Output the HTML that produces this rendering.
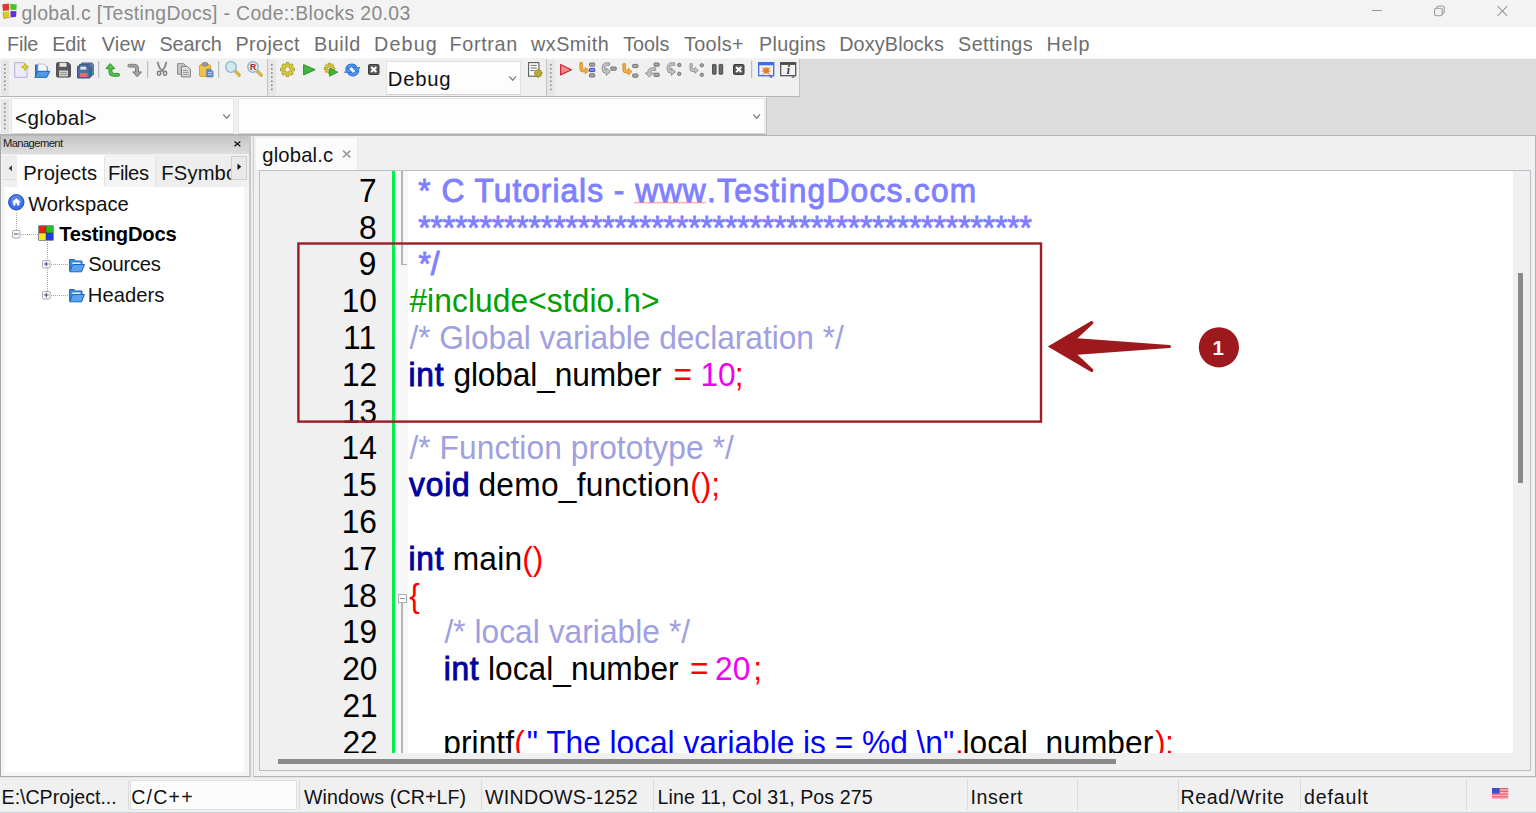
<!DOCTYPE html>
<html><head><meta charset="utf-8"><title>global.c [TestingDocs] - Code::Blocks 20.03</title>
<style>
*{margin:0;padding:0;box-sizing:border-box}
html,body{width:1536px;height:813px;overflow:hidden;background:#f0f0f0}
body{position:relative;font-family:"Liberation Sans",sans-serif;color:#000}
.abs,.t{position:absolute}
.t{line-height:1;white-space:pre}
.c{transform:scaleY(1.02);transform-origin:0 84.65%}
svg{display:block;overflow:visible}
</style></head><body>
<div class="abs" style="left:0px;top:0px;width:1536px;height:27px;background:#f3f3f3;"></div>
<svg class="abs" style="left:2px;top:3px" width="16" height="16" viewBox="0 0 16 16"><path d="M.6 1.200l6.400-.6l.2 6.600l-6 .8z" fill="#e03a30"/><path d="M8.200.8l6.600.600l-.400 5.600l-6-.2z" fill="#48c030"/><path d="M1 8.900l6.200-.7l.3 6.300l-5.700 1z" fill="#d8cc28"/><path d="M8.500 8l6 .2l-.5 5.600l-5.400.8z" fill="#6030d0"/><path d="M.6 1.200l.600 6.800M1 8.900l.8 6.600l5.700-1" fill="none" stroke="#7a2a20" stroke-width=".6" opacity=".6"/></svg>
<div class="t" style="left:21.45px;top:4.00px;font-size:19.4px;color:#8a8a8a;letter-spacing:0.352px;">global.c [TestingDocs] - Code::Blocks 20.03</div>
<svg class="abs" style="left:1360px;top:0" width="176" height="27" viewBox="0 0 176 27" fill="none" stroke="#9a9a9a" stroke-width="1.100"><path d="M12 10.500h9.800"/><rect x="74.600" y="8.200" width="7.600" height="7.600" rx="1.600"/><path d="M76.800 8.200V7.600A1.600 1.600 0 0 1 78.400 6h4.200A1.600 1.600 0 0 1 84.200 7.600v4.200A1.600 1.600 0 0 1 82.600 13.400H82.200"/><path d="M137.600 6.100l9.600 9.800M147.200 6.100l-9.600 9.800"/></svg>
<div class="abs" style="left:0px;top:27px;width:1536px;height:31px;background:#fff;"></div>
<div class="t" style="left:7.00px;top:35.00px;font-size:19.8px;color:#6e6e6e;letter-spacing:-0.167px;">File</div>
<div class="t" style="left:52.20px;top:35.00px;font-size:19.8px;color:#6e6e6e;letter-spacing:-0.067px;">Edit</div>
<div class="t" style="left:101.75px;top:35.00px;font-size:19.8px;color:#6e6e6e;letter-spacing:0.250px;">View</div>
<div class="t" style="left:159.50px;top:35.00px;font-size:19.8px;color:#6e6e6e;letter-spacing:-0.100px;">Search</div>
<div class="t" style="left:235.50px;top:35.00px;font-size:19.8px;color:#6e6e6e;letter-spacing:0.417px;">Project</div>
<div class="t" style="left:314.00px;top:35.00px;font-size:19.8px;color:#6e6e6e;letter-spacing:0.562px;">Build</div>
<div class="t" style="left:374.00px;top:35.00px;font-size:19.8px;color:#6e6e6e;letter-spacing:1.125px;">Debug</div>
<div class="t" style="left:449.50px;top:35.00px;font-size:19.8px;color:#6e6e6e;letter-spacing:0.667px;">Fortran</div>
<div class="t" style="left:531.00px;top:35.00px;font-size:19.8px;color:#6e6e6e;letter-spacing:0.500px;">wxSmith</div>
<div class="t" style="left:623.20px;top:35.00px;font-size:19.8px;color:#6e6e6e;">Tools</div>
<div class="t" style="left:684.00px;top:35.00px;font-size:19.8px;color:#6e6e6e;letter-spacing:0.350px;">Tools+</div>
<div class="t" style="left:759.00px;top:35.00px;font-size:19.8px;color:#6e6e6e;letter-spacing:0.292px;">Plugins</div>
<div class="t" style="left:839.20px;top:35.00px;font-size:19.8px;color:#6e6e6e;letter-spacing:0.139px;">DoxyBlocks</div>
<div class="t" style="left:958.00px;top:35.00px;font-size:19.8px;color:#6e6e6e;letter-spacing:0.464px;">Settings</div>
<div class="t" style="left:1046.50px;top:35.00px;font-size:19.8px;color:#6e6e6e;letter-spacing:0.733px;">Help</div>
<div class="abs" style="left:0px;top:58px;width:1536px;height:78px;background:#dcdcdc;"></div>
<div class="abs" style="left:0px;top:135px;width:1536px;height:1px;background:#b4b4b4;"></div>
<div class="abs" style="left:0px;top:58px;width:800px;height:38.5px;background:#f0f0f0;border-right:1px solid #c2c2c2;border-bottom:1px solid #b4b4b4"></div>
<div class="abs" style="left:0px;top:58px;width:1536px;height:1px;background:#f4f4f4;"></div>
<div class="abs" style="left:0px;top:97px;width:766.8px;height:38px;background:#f0f0f0;border-right:1px solid #c2c2c2;border-bottom:1px solid #b4b4b4;border-top:1px solid #fafafa"></div>
<div class="abs" style="left:1px;top:60.3px;width:8px;height:36px;background:#e6e6e6;"></div>
<svg class="abs" style="left:4.2px;top:64.3px" width="3" height="30" fill="#8a8a8a"><rect x="0" y="0.0" width="1.6" height="1.6"/><rect x="0" y="4.1" width="1.6" height="1.6"/><rect x="0" y="8.2" width="1.6" height="1.6"/><rect x="0" y="12.3" width="1.6" height="1.6"/><rect x="0" y="16.4" width="1.6" height="1.6"/><rect x="0" y="20.5" width="1.6" height="1.6"/><rect x="0" y="24.6" width="1.6" height="1.6"/></svg>
<div class="abs" style="left:268px;top:60.3px;width:8px;height:36px;background:#e6e6e6;"></div>
<svg class="abs" style="left:271.2px;top:64.3px" width="3" height="30" fill="#8a8a8a"><rect x="0" y="0.0" width="1.6" height="1.6"/><rect x="0" y="4.1" width="1.6" height="1.6"/><rect x="0" y="8.2" width="1.6" height="1.6"/><rect x="0" y="12.3" width="1.6" height="1.6"/><rect x="0" y="16.4" width="1.6" height="1.6"/><rect x="0" y="20.5" width="1.6" height="1.6"/><rect x="0" y="24.6" width="1.6" height="1.6"/></svg>
<div class="abs" style="left:547px;top:60.3px;width:8px;height:36px;background:#e6e6e6;"></div>
<svg class="abs" style="left:550.2px;top:64.3px" width="3" height="30" fill="#8a8a8a"><rect x="0" y="0.0" width="1.6" height="1.6"/><rect x="0" y="4.1" width="1.6" height="1.6"/><rect x="0" y="8.2" width="1.6" height="1.6"/><rect x="0" y="12.3" width="1.6" height="1.6"/><rect x="0" y="16.4" width="1.6" height="1.6"/><rect x="0" y="20.5" width="1.6" height="1.6"/><rect x="0" y="24.6" width="1.6" height="1.6"/></svg>
<div class="abs" style="left:266.5px;top:59px;width:1px;height:37px;background:#c2c2c2;"></div>
<div class="abs" style="left:545.5px;top:59px;width:1px;height:37px;background:#c2c2c2;"></div>
<div class="abs" style="left:1px;top:100px;width:8px;height:33px;background:#e6e6e6;"></div>
<svg class="abs" style="left:4.2px;top:103px" width="3" height="30" fill="#8a8a8a"><rect x="0" y="0.0" width="1.6" height="1.6"/><rect x="0" y="4.1" width="1.6" height="1.6"/><rect x="0" y="8.2" width="1.6" height="1.6"/><rect x="0" y="12.3" width="1.6" height="1.6"/><rect x="0" y="16.4" width="1.6" height="1.6"/><rect x="0" y="20.5" width="1.6" height="1.6"/><rect x="0" y="24.6" width="1.6" height="1.6"/></svg>
<div class="abs" style="left:98px;top:61px;width:1px;height:17px;background:#bcbcbc;"></div>
<div class="abs" style="left:99px;top:61px;width:1px;height:17px;background:#e4e4e4;"></div>
<div class="abs" style="left:147px;top:61px;width:1px;height:17px;background:#bcbcbc;"></div>
<div class="abs" style="left:148px;top:61px;width:1px;height:17px;background:#e4e4e4;"></div>
<div class="abs" style="left:218px;top:61px;width:1px;height:17px;background:#bcbcbc;"></div>
<div class="abs" style="left:219px;top:61px;width:1px;height:17px;background:#e4e4e4;"></div>
<div class="abs" style="left:751px;top:61px;width:1px;height:17px;background:#bcbcbc;"></div>
<div class="abs" style="left:752px;top:61px;width:1px;height:17px;background:#e4e4e4;"></div>
<svg class="abs" style="left:14px;top:62px" width="14.5" height="16" viewBox="0 0 14.5 16"><path d="M.7.7h9.300l3 3v11.600h-12.300z" fill="#ececfa" stroke="#b4acd4" stroke-width="1"/><path d="M11 1.600l1 2.300l2.300 1l-2.300 1l-1 2.300l-1-2.300l-2.300-1l2.300-1z" fill="#f0e850" stroke="#c8bc20" stroke-width="1.300" stroke-linejoin="round"/></svg>
<svg class="abs" style="left:33.5px;top:62.5px" width="16.5" height="15" viewBox="0 0 16.5 15"><path d="M1.500 12.500v-10.500h4l1.500 1.500h6v9z" fill="#3d86d8" stroke="#1e62b4" stroke-width="1"/><path d="M4 9v-8h6l3 3v6z" fill="#f4f6fc" stroke="#9aa6c4" stroke-width=".7"/><path d="M.8 14.300l3-6h12l-3 6z" fill="#4e9be8" stroke="#1e62b4" stroke-width="1"/></svg>
<svg class="abs" style="left:56px;top:62px" width="15" height="15.5" viewBox="0 0 15 15.500"><path d="M.7 1.700a1 1 0 0 1 1-1h10.600l2 2v11.300a1 1 0 0 1-1 1h-11.600a1 1 0 0 1-1-1z" fill="#5a5a5a" stroke="#3c3c3c" stroke-width="1"/><rect x="3.500" y=".8" width="7" height="4" fill="#e4e4e4"/><rect x="3" y="8.500" width="9" height="6" fill="#d0d0d0"/><path d="M4 10.500h7M4 12.500h7" stroke="#8a8a8a" stroke-width=".8"/></svg>
<svg class="abs" style="left:76.5px;top:61.5px" width="17" height="16.5" viewBox="0 0 17 16.500"><path d="M4.500 1h10.500l1.300 1.300v10.700h-11.800z" fill="#6d88b4" stroke="#3c5684" stroke-width=".9"/><path d="M2.500 2.500h10.500l1.300 1.300v10.700h-11.800z" fill="#5f7cae" stroke="#3c5684" stroke-width=".9"/><path d="M.6 4.200h10.800l1.600 1.600v10.200h-12.400z" fill="#4f6ea4" stroke="#34507e" stroke-width="1"/><rect x="3.300" y="4.600" width="6" height="3" fill="#dfe6f2"/><rect x="3" y="11" width="7.500" height="4" fill="#e46a74"/></svg>
<svg class="abs" style="left:105.3px;top:62.8px" width="15" height="13.5" viewBox="0 0 15 13.500"><path d="M5.200.6l4.600 5h-2.800v3.200a1.600 1.600 0 0 0 1.600 1.600h4.600a1.400 1.400 0 0 1 0 2.800h-5.200a4 4 0 0 1-4-4v-3.600h-3z" fill="#56c452" stroke="#2a9428" stroke-width="1" stroke-linejoin="round"/></svg>
<svg class="abs" style="left:127px;top:63.8px" width="15.5" height="13.5" viewBox="0 0 15.500 13.500"><path d="M10.300 12.900l-4.600-5h2.800v-3.200a1.600 1.600 0 0 0-1.600-1.600h-4.600a1.400 1.400 0 0 1 0-2.800h5.200a4 4 0 0 1 4 4v3.600h3z" fill="#a4a4a4" stroke="#7c7c7c" stroke-width="1" stroke-linejoin="round"/></svg>
<svg class="abs" style="left:156.3px;top:62.3px" width="12" height="14" viewBox="0 0 12 14"><path d="M1.800.8c.6 3.600 2.200 6 4.200 8.400M10.200.8c-.6 3.600-2.200 6-4.200 8.400" fill="none" stroke="#8c8c8c" stroke-width="2" stroke-linecap="round"/><ellipse cx="3" cy="11.300" rx="1.700" ry="2.100" fill="#d8d8d8" stroke="#7a7a7a" stroke-width="1.200"/><ellipse cx="9" cy="11.300" rx="1.700" ry="2.100" fill="#d8d8d8" stroke="#7a7a7a" stroke-width="1.200"/></svg>
<svg class="abs" style="left:177.3px;top:63px" width="14" height="14.5" viewBox="0 0 14 14.500"><path d="M.6.600h6l2.400 2.400v8.200h-8.400z" fill="#c8c8c8" stroke="#8a8a8a" stroke-width="1"/><path d="M4.400 3.300h6l3 3v7.600h-9z" fill="#dcdcdc" stroke="#7c7c7c" stroke-width="1"/><path d="M6 7.500h5M6 9.500h5.500M6 11.500h5.500" stroke="#8a8a8a" stroke-width=".8"/></svg>
<svg class="abs" style="left:198.8px;top:61.8px" width="14.5" height="15.5" viewBox="0 0 14.500 15.500"><rect x=".6" y="2.800" width="10.800" height="11.600" rx="1" fill="#f0c448" stroke="#d0a020" stroke-width="1"/><rect x="3.300" y=".6" width="5.400" height="3.400" rx="1.400" fill="#9c9ca4" stroke="#74747c" stroke-width=".8"/><path d="M7.600 7.200h4.200l2.200 2.200v5.500h-6.400z" fill="#4c8ee0" stroke="#7a8494" stroke-width=".9"/><path d="M9 10.500h3.600M9 12.500h3.600" stroke="#cfe0f8" stroke-width=".8"/></svg>
<svg class="abs" style="left:225.2px;top:61.3px" width="16" height="16" viewBox="0 0 16 16"><path d="M9.200 9.200l5 5" stroke="#c4a228" stroke-width="3.200" stroke-linecap="round"/><path d="M9.200 9.200l5 5" stroke="#e0c450" stroke-width="1.400" stroke-linecap="round"/><circle cx="6" cy="6" r="5.300" fill="#d4e8f0" stroke="#88b8d0" stroke-width="1.300"/></svg>
<svg class="abs" style="left:246.8px;top:61.3px" width="16" height="16" viewBox="0 0 16 16"><path d="M9.200 9.200l5 5" stroke="#c4a228" stroke-width="3.200" stroke-linecap="round"/><path d="M9.200 9.200l5 5" stroke="#e0c450" stroke-width="1.400" stroke-linecap="round"/><circle cx="6" cy="6" r="5.300" fill="#d4e8f0" stroke="#88b8d0" stroke-width="1.300"/><text x="6.100" y="9.300" font-family="Liberation Sans,sans-serif" font-weight="bold" font-size="8.500" fill="#c02028" text-anchor="middle">R</text></svg>
<svg class="abs" style="left:279.5px;top:62.3px" width="15" height="15" viewBox="0 0 15 15"><path d="M12.16 5.97L14.48 6.21L14.48 8.79L12.16 9.03L11.87 9.71L13.35 11.53L11.53 13.35L9.71 11.87L9.03 12.16L8.79 14.48L6.21 14.48L5.97 12.16L5.29 11.87L3.47 13.35L1.65 11.53L3.13 9.71L2.84 9.03L0.52 8.79L0.52 6.21L2.84 5.97L3.13 5.29L1.65 3.47L3.47 1.65L5.29 3.13L5.97 2.84L6.21 0.52L8.79 0.52L9.03 2.84L9.71 3.13L11.53 1.65L13.35 3.47L11.87 5.29z" fill="#dccb3c" stroke="#9a8e20" stroke-width=".8" stroke-linejoin="round"/><circle cx="7.5" cy="7.5" r="2.7" fill="#f0f0f0" stroke="#9a8e20" stroke-width=".8"/></svg>
<svg class="abs" style="left:302.5px;top:64px" width="13" height="11.5" viewBox="0 0 13 11.500"><path d="M.6.600l11.600 5.100l-11.600 5.200z" fill="#3fb63c" stroke="#2c942c" stroke-width="1" stroke-linejoin="round"/></svg>
<svg class="abs" style="left:323.5px;top:62.8px" width="14.5" height="13.8" viewBox="0 0 14.500 13.800"><path d="M8.92 4.38L10.71 4.54L10.71 6.46L8.92 6.62L8.71 7.13L9.87 8.50L8.50 9.87L7.13 8.71L6.62 8.92L6.46 10.71L4.54 10.71L4.38 8.92L3.87 8.71L2.50 9.87L1.13 8.50L2.29 7.13L2.08 6.62L0.29 6.46L0.29 4.54L2.08 4.38L2.29 3.87L1.13 2.50L2.50 1.13L3.87 2.29L4.38 2.08L4.54 0.29L6.46 0.29L6.62 2.08L7.13 2.29L8.50 1.13L9.87 2.50L8.71 3.87z" fill="#dccb3c" stroke="#9a8e20" stroke-width=".8" stroke-linejoin="round"/><circle cx="5.5" cy="5.5" r="1.9" fill="#f0f0f0" stroke="#9a8e20" stroke-width=".8"/><path d="M5.600 5.200l8.200 4l-8.200 4z" fill="#3fb63c" stroke="#2c942c" stroke-width=".9" stroke-linejoin="round"/></svg>
<svg class="abs" style="left:343.5px;top:62.5px" width="16.5" height="14" viewBox="0 0 16.500 14"><g fill="none" stroke-linecap="butt"><path d="M3 6.800a4.600 4.600 0 0 1 8.600-2" stroke="#1e62c8" stroke-width="3.600"/><path d="M13.500 7.200a4.600 4.600 0 0 1-8.600 2" stroke="#1e62c8" stroke-width="3.600"/><path d="M3 6.800a4.600 4.600 0 0 1 8.600-2" stroke="#4c98f4" stroke-width="2.200"/><path d="M13.500 7.200a4.600 4.600 0 0 1-8.600 2" stroke="#4c98f4" stroke-width="2.200"/></g><path d="M8.600 4.600h7.400l-3.500 4.400z" fill="#4c98f4" stroke="#1e62c8" stroke-width=".7" stroke-linejoin="round"/><path d="M7.900 9.400h-7.400l3.500-4.400z" fill="#4c98f4" stroke="#1e62c8" stroke-width=".7" stroke-linejoin="round"/></svg>
<svg class="abs" style="left:368px;top:64.2px" width="11.5" height="11" viewBox="0 0 11.500 11"><rect x=".5" y=".5" width="10.500" height="10" rx="1.300" fill="#5a5a5a" stroke="#3a3a3a" stroke-width="1"/><path d="M3.200 3l5.100 5M8.300 3l-5.100 5" stroke="#fff" stroke-width="2"/></svg>
<div class="abs" style="left:386px;top:60.5px;width:135px;height:34px;background:#fdfdfd;border:1px solid #e2e2e2;border-bottom-color:#d0d0d0"></div>
<div class="t" style="left:387.85px;top:69.00px;font-size:20.3px;color:#111;letter-spacing:0.737px;">Debug</div>
<svg class="abs" style="left:509.3px;top:76px" width="7.4" height="4.8" viewBox="0 0 7.4 4.8"><path d="M.3 .4l3.40 3.8l3.40 -3.8" fill="none" stroke="#7c7c7c" stroke-width="1.300"/></svg>
<svg class="abs" style="left:527.8px;top:62.3px" width="14.5" height="15.5" viewBox="0 0 14.500 15.500"><rect x=".6" y=".6" width="10.300" height="13.600" fill="#fcfcfc" stroke="#5a5a5a" stroke-width="1.100"/><path d="M2.600 3.400h6.200M2.600 6h6.200M2.600 8.600h4" stroke="#6a6a6a" stroke-width="1"/><path d="M12.86 10.43L14.04 10.59L14.04 12.01L12.86 12.17L12.70 12.57L13.41 13.51L12.41 14.51L11.47 13.80L11.07 13.96L10.91 15.14L9.49 15.14L9.33 13.96L8.93 13.80L7.99 14.51L6.99 13.51L7.70 12.57L7.54 12.17L6.36 12.01L6.36 10.59L7.54 10.43L7.70 10.03L6.99 9.09L7.99 8.09L8.93 8.80L9.33 8.64L9.49 7.46L10.91 7.46L11.07 8.64L11.47 8.80L12.41 8.09L13.41 9.09L12.70 10.03z" fill="#c8b428" stroke="#8c8018" stroke-width=".8" stroke-linejoin="round"/><circle cx="10.2" cy="11.3" r="1.1" fill="#f0f0f0" stroke="#8c8018" stroke-width=".8"/></svg>
<svg class="abs" style="left:559.5px;top:64px" width="12" height="11.5" viewBox="0 0 12 11.500"><path d="M.6.600l10.800 5.100l-10.800 5.200z" fill="#f08a8a" stroke="#d02030" stroke-width="1.100" stroke-linejoin="round"/></svg>
<svg class="abs" style="left:578.8px;top:62px" width="16.5" height="16" viewBox="0 0 16.500 16"><path d="M1 .7h2.400v5.300a1.300 1.300 0 0 0 1.300 1.300h1.600v-2l3.600 3.300l-3.600 3.300v-2h-2.400a3 3 0 0 1-3-3v-5.900z" fill="#f4b048" stroke="#d08a20" stroke-width=".9" stroke-linejoin="round"/><rect x="10.5" y="1" width="5.2" height="3.2" rx=".6" fill="#a8a8a8" stroke="#6a6a6a" stroke-width=".9"/><rect x="10.5" y="6.4" width="5.2" height="3.2" rx=".6" fill="#7a8cf4" stroke="#2c3cd0" stroke-width=".9"/><rect x="10.5" y="11.8" width="5.2" height="3.2" rx=".6" fill="#a8a8a8" stroke="#6a6a6a" stroke-width=".9"/></svg>
<svg class="abs" style="left:601.3px;top:61.8px" width="16" height="16" viewBox="0 0 16 16"><path d="M8.600.8h-3.200a4.200 4.200 0 0 0-4.200 4.200v2.600a3.600 3.600 0 0 0 3.600 3.600h.6v2.200l4-3.700l-4-3.700v2.300h-.400a1 1 0 0 1-1-1v-2.300a1.600 1.600 0 0 1 1.600-1.600h3z" fill="#c4c4c4" stroke="#8e8e8e" stroke-width=".9" stroke-linejoin="round"/><rect x="9.8" y="5" width="5.4" height="3.2" rx=".6" fill="#a8a8a8" stroke="#6a6a6a" stroke-width=".9"/></svg>
<svg class="abs" style="left:621.8px;top:62.5px" width="16.5" height="15" viewBox="0 0 16.500 15"><path d="M1 .7h2.400v5.300a1.300 1.300 0 0 0 1.300 1.300h1.600v-2l3.600 3.300l-3.600 3.300v-2h-2.400a3 3 0 0 1-3-3v-5.900z" fill="#f4b048" stroke="#d08a20" stroke-width=".9" stroke-linejoin="round"/><rect x="10.7" y="1.4" width="5.2" height="3.2" rx=".6" fill="#a8a8a8" stroke="#6a6a6a" stroke-width=".9"/><rect x="10.7" y="11" width="5.2" height="3.2" rx=".6" fill="#a8a8a8" stroke="#6a6a6a" stroke-width=".9"/></svg>
<svg class="abs" style="left:644px;top:62px" width="15.5" height="16" viewBox="0 0 15.500 16"><path d="M11.600 5.800h-3.600a4.200 4.200 0 0 0-4.200 4.200v1h-2.800l4.200 4l4.200-4h-2.800v-1a1.400 1.400 0 0 1 1.400-1.400h3.600z" fill="#c4c4c4" stroke="#8e8e8e" stroke-width=".9" stroke-linejoin="round"/><rect x="10" y="1" width="5.2" height="3.2" rx=".6" fill="#a8a8a8" stroke="#6a6a6a" stroke-width=".9"/><rect x="10" y="11.2" width="5.2" height="3.2" rx=".6" fill="#a8a8a8" stroke="#6a6a6a" stroke-width=".9"/></svg>
<svg class="abs" style="left:666px;top:61.8px" width="16" height="16" viewBox="0 0 16 16"><path d="M8.600.8h-3.200a4.200 4.200 0 0 0-4.200 4.200v2.600a3.600 3.600 0 0 0 3.600 3.600h.6v2.200l4-3.700l-4-3.700v2.300h-.400a1 1 0 0 1-1-1v-2.300a1.600 1.600 0 0 1 1.600-1.600h3z" fill="#c4c4c4" stroke="#8e8e8e" stroke-width=".9" stroke-linejoin="round"/><circle cx="13.3" cy="3" r="1.700" fill="#a8a8a8" stroke="#6a6a6a" stroke-width=".9"/><circle cx="13.3" cy="11.8" r="1.700" fill="#a8a8a8" stroke="#6a6a6a" stroke-width=".9"/></svg>
<svg class="abs" style="left:688.5px;top:63px" width="15.5" height="14.5" viewBox="0 0 15.500 14.500"><path d="M1 .7h2.200v4.300a1.200 1.200 0 0 0 1.200 1.200h1.500v-1.800l3.400 3l-3.400 3v-1.800h-2.200a2.700 2.700 0 0 1-2.700-2.700z" fill="#c4c4c4" stroke="#8e8e8e" stroke-width=".9" stroke-linejoin="round"/><circle cx="12.8" cy="2.3" r="1.700" fill="#a8a8a8" stroke="#6a6a6a" stroke-width=".9"/><circle cx="12.8" cy="11.8" r="1.700" fill="#a8a8a8" stroke="#6a6a6a" stroke-width=".9"/></svg>
<svg class="abs" style="left:711.5px;top:64.3px" width="12" height="10.8" viewBox="0 0 12 10.800"><rect x=".5" y=".4" width="3.600" height="9.800" rx=".5" fill="#6a6a6a" stroke="#3a3a3a" stroke-width=".8"/><rect x="7.100" y=".4" width="3.600" height="9.800" rx=".5" fill="#6a6a6a" stroke="#3a3a3a" stroke-width=".8"/></svg>
<svg class="abs" style="left:732.8px;top:64.2px" width="11.5" height="11" viewBox="0 0 11.500 11"><rect x=".5" y=".5" width="10.500" height="10" rx="1.300" fill="#5a5a5a" stroke="#3a3a3a" stroke-width="1"/><path d="M3.200 3l5.100 5M8.300 3l-5.100 5" stroke="#fff" stroke-width="2"/></svg>
<svg class="abs" style="left:757.8px;top:61.8px" width="16.5" height="16" viewBox="0 0 16.500 16"><rect x=".7" y=".7" width="15" height="13" fill="#f4f4fa" stroke="#3c6ce8" stroke-width="1.300"/><rect x=".7" y=".7" width="15" height="2.600" fill="#3c6ce8"/><ellipse cx="8.200" cy="8.600" rx="2.800" ry="3.300" fill="#e88a30"/><path d="M3.800 5.500l3 2M12.600 5.500l-3 2M3.600 9h9.200M4.200 12.800l2.600-2.400M12.200 12.800l-2.600-2.400" stroke="#c06a20" stroke-width=".8"/><path d="M11 14.400h4l-2 1.600z" fill="#444"/></svg>
<svg class="abs" style="left:779.7px;top:61.8px" width="16.5" height="16" viewBox="0 0 16.500 16"><rect x=".7" y=".7" width="15" height="13" fill="#f2f2f2" stroke="#4a4a4a" stroke-width="1.200"/><rect x=".7" y=".7" width="15" height="2.200" fill="#4a4a4a"/><text x="8.300" y="12.300" font-family="Liberation Serif,serif" font-style="italic" font-weight="bold" font-size="11.500" fill="#333" text-anchor="middle">i</text><path d="M11 14.400h4l-2 1.600z" fill="#444"/></svg>
<div class="abs" style="left:11px;top:98px;width:223px;height:36px;background:#fdfdfd;border:1px solid #e6e6e6;border-bottom-color:#d2d2d2"></div>
<div class="abs" style="left:237.5px;top:98px;width:527.5px;height:36px;background:#fdfdfd;border:1px solid #e6e6e6;border-bottom-color:#d2d2d2"></div>
<div class="t" style="left:15.00px;top:108.00px;font-size:20.6px;color:#111;letter-spacing:0.357px;">&lt;global&gt;</div>
<svg class="abs" style="left:223px;top:113.9px" width="7.4" height="4.8" viewBox="0 0 7.4 4.8"><path d="M.3 .4l3.40 3.8l3.40 -3.8" fill="none" stroke="#7c7c7c" stroke-width="1.300"/></svg>
<svg class="abs" style="left:752.8px;top:113.9px" width="7.4" height="4.8" viewBox="0 0 7.4 4.8"><path d="M.3 .4l3.40 3.8l3.40 -3.8" fill="none" stroke="#7c7c7c" stroke-width="1.300"/></svg>
<div class="abs" style="left:0px;top:136px;width:254px;height:641px;background:#f0f0f0;"></div>
<div class="abs" style="left:0px;top:135.5px;width:249px;height:18px;background:linear-gradient(#c4c4c4,#dedede);"></div>
<div class="t" style="left:2.90px;top:138.00px;font-size:11.2px;color:#1a1a1a;letter-spacing:-0.572px;">Management</div>
<svg class="abs" style="left:234.200px;top:140.800px" width="6.800" height="5.600" viewBox="0 0 6.800 5.600"><path d="M.5.400l5.800 4.800M6.300.400l-5.800 4.800" stroke="#111" stroke-width="1.300"/></svg>
<div class="abs" style="left:249px;top:136px;width:1.5px;height:641px;background:#c9c9c9;"></div>
<div class="abs" style="left:250.5px;top:136px;width:2px;height:641px;background:#ececec;"></div>
<div class="abs" style="left:252.8px;top:136px;width:1.2px;height:641px;background:#cdcdcd;"></div>
<div class="abs" style="left:17px;top:154.5px;width:87.5px;height:33px;background:#fdfdfd;"></div>
<div class="abs" style="left:104.5px;top:156.5px;width:50px;height:30px;background:#f4f4f4;"></div>
<div class="abs" style="left:154.5px;top:156.5px;width:77px;height:30px;background:#ededed;"></div>
<div class="abs" style="left:104px;top:157px;width:1px;height:29px;background:#e2e2e2;"></div>
<div class="abs" style="left:154.5px;top:157px;width:1px;height:29px;background:#e2e2e2;"></div>
<div class="t" style="left:23.25px;top:163.00px;font-size:20.2px;color:#111;letter-spacing:0.129px;">Projects</div>
<div class="t" style="left:108.05px;top:163.00px;font-size:20.2px;color:#111;letter-spacing:-0.412px;">Files</div>
<div class="abs" style="left:161px;top:155px;width:70px;height:31px;overflow:hidden">
<div class="t " style="left:0.30px;top:7.80px;font-size:20.2px;color:#111;letter-spacing:0.151px;">FSymbols</div>
</div>
<div class="abs" style="left:231px;top:155.5px;width:15.5px;height:24.5px;background:#e9e9e9;border:1px solid #cfcfcf"></div>
<svg class="abs" style="left:236.500px;top:163px" width="5" height="8"><path d="M.5.500l3.800 3.300l-3.800 3.300z" fill="#111"/></svg>
<div class="abs" style="left:2.5px;top:155.5px;width:14px;height:24.5px;background:#ededed;border-bottom:1px solid #dcdcdc"></div>
<svg class="abs" style="left:7.500px;top:164.500px" width="5" height="7"><path d="M4 .3l-3.400 3l3.400 3z" fill="#444"/></svg>
<div class="abs" style="left:1px;top:186.8px;width:247.6px;height:589px;background:#f5f5f5;"></div>
<div class="abs" style="left:5.4px;top:187px;width:239px;height:584.5px;background:#fff;"></div>
<div class="abs" style="left:0px;top:136px;width:1px;height:641px;background:#a6a6a6;"></div>
<div class="abs" style="left:16px;top:213px;width:1px;height:17px;background:repeating-linear-gradient(to bottom,#a8a8a8 0 1px,transparent 1px 2px);"></div>
<div class="abs" style="left:20.5px;top:234px;width:17px;height:1px;background:repeating-linear-gradient(to right,#a8a8a8 0 1px,transparent 1px 2px);"></div>
<div class="abs" style="left:46.5px;top:242px;width:1px;height:54px;background:repeating-linear-gradient(to bottom,#a8a8a8 0 1px,transparent 1px 2px);"></div>
<div class="abs" style="left:51px;top:264px;width:17px;height:1px;background:repeating-linear-gradient(to right,#a8a8a8 0 1px,transparent 1px 2px);"></div>
<div class="abs" style="left:51px;top:294.5px;width:17px;height:1px;background:repeating-linear-gradient(to right,#a8a8a8 0 1px,transparent 1px 2px);"></div>
<svg class="abs" style="left:12.3px;top:230px" width="8.500" height="8.500" viewBox="0 0 8.500 8.500"><rect x=".5" y=".5" width="7.500" height="7.500" rx="1" fill="#fafafa" stroke="#a4a4a4" stroke-width=".9"/><path d="M2 4h4.500" stroke="#3c4a8c" stroke-width="1"/></svg>
<svg class="abs" style="left:42.3px;top:260px" width="8.500" height="8.500" viewBox="0 0 8.500 8.500"><rect x=".5" y=".5" width="7.500" height="7.500" rx="1" fill="#fafafa" stroke="#a4a4a4" stroke-width=".9"/><path d="M2 4h4.500" stroke="#3c4a8c" stroke-width="1"/><path d="M4.250 1.800v4.500" stroke="#3c4a8c" stroke-width="1"/></svg>
<svg class="abs" style="left:42.3px;top:290.5px" width="8.500" height="8.500" viewBox="0 0 8.500 8.500"><rect x=".5" y=".5" width="7.500" height="7.500" rx="1" fill="#fafafa" stroke="#a4a4a4" stroke-width=".9"/><path d="M2 4h4.500" stroke="#3c4a8c" stroke-width="1"/><path d="M4.250 1.800v4.500" stroke="#3c4a8c" stroke-width="1"/></svg>
<svg class="abs" style="left:7.600px;top:194.400px" width="16.600" height="16.600" viewBox="0 0 16.600 16.600"><circle cx="8.300" cy="8.300" r="7.700" fill="#3a6ee8" stroke="#2446b8" stroke-width="1"/><circle cx="8.300" cy="6.500" r="5.500" fill="#6c98f4" opacity=".55"/><path d="M8.300 4.200l4.300 3.900h-1.300v3.500h-2v-2.300h-2v2.300h-2v-3.500h-1.300z" fill="#fff"/></svg>
<div class="t" style="left:28.15px;top:194.00px;font-size:20.2px;color:#111;">Workspace</div>
<svg class="abs" style="left:38.400px;top:225px" width="16" height="16" viewBox="0 0 16 16"><rect x=".5" y=".5" width="15" height="15" fill="#222"/><rect x="1" y="1" width="6.800" height="6.800" fill="#e8221c"/><rect x="8.200" y="1" width="6.800" height="6.800" fill="#22c01c"/><rect x="1" y="8.200" width="6.800" height="6.800" fill="#f4e81c"/><rect x="8.200" y="8.200" width="6.800" height="6.800" fill="#1c3ce8"/></svg>
<div class="t" style="left:59.15px;top:224.00px;font-size:20.2px;font-weight:bold;letter-spacing:-0.210px;">TestingDocs</div>
<svg class="abs" style="left:68.8px;top:257.6px" width="16" height="14.500" viewBox="0 0 16 14.500"><path d="M.6 12.500v-11h4.600l1.300 1.500h6.500v9.500z" fill="#3c8ae0" stroke="#1e62b8" stroke-width="1"/><path d="M3.300 4.500h8.200v5h-8.200z" fill="#e8f0fc"/><path d="M.7 13.800l3-7.300h11.800l-3 7.300z" fill="#58a4f0" stroke="#1e62b8" stroke-width="1" stroke-linejoin="round"/></svg>
<svg class="abs" style="left:68.8px;top:288.1px" width="16" height="14.500" viewBox="0 0 16 14.500"><path d="M.6 12.500v-11h4.600l1.300 1.500h6.500v9.500z" fill="#3c8ae0" stroke="#1e62b8" stroke-width="1"/><path d="M3.300 4.500h8.200v5h-8.200z" fill="#e8f0fc"/><path d="M.7 13.800l3-7.300h11.800l-3 7.300z" fill="#58a4f0" stroke="#1e62b8" stroke-width="1" stroke-linejoin="round"/></svg>
<div class="t" style="left:88.30px;top:254.00px;font-size:20.2px;color:#111;letter-spacing:-0.258px;">Sources</div>
<div class="t" style="left:87.85px;top:285.00px;font-size:20.2px;color:#111;letter-spacing:0.025px;">Headers</div>
<div class="abs" style="left:254px;top:136px;width:1282px;height:641px;background:#f0f0f0;"></div>
<div class="abs" style="left:254px;top:776px;width:1282px;height:1px;background:#b4b4b4;"></div>
<div class="abs" style="left:0px;top:776px;width:250px;height:1px;background:#acacac;"></div>
<div class="abs" style="left:1535px;top:136px;width:1px;height:641px;background:#b4b4b4;"></div>
<div class="abs" style="left:256px;top:137.5px;width:102px;height:32.5px;background:#fbfbfb;border-right:1px solid #e6e6e6"></div>
<div class="t" style="left:262.25px;top:145.00px;font-size:20.2px;color:#111;letter-spacing:0.193px;">global.c</div>
<svg class="abs" style="left:342px;top:149.700px" width="9.400" height="8.200" viewBox="0 0 9.400 8.200"><path d="M1 .7l7.400 6.800M8.400 .7l-7.400 6.800" stroke="#9a9a9a" stroke-width="1.700"/></svg>
<div class="abs" style="left:259px;top:170.3px;width:1271.5px;height:601px;background:#fff;border:1px solid #b9c0cc"></div>
<div class="abs" id="ed" style="left:260px;top:171.3px;width:1269.5px;height:581.9000000000001px;overflow:hidden;background:#fff">
<div class="abs" style="left:0px;top:-0.3px;width:132px;height:600px;background:#f0f0f0;"></div>
<div class="abs" style="left:132px;top:-0.3px;width:3.4px;height:600px;background:#00f050;"></div>
<div class="abs" style="left:135.4px;top:-0.3px;width:12.8px;height:600px;background:#f7f7f7;"></div>
<div class="abs" style="left:141.4px;top:-0.3px;width:1.3px;height:93.5px;background:#b4b4b4;"></div>
<div class="abs" style="left:141.4px;top:92.5px;width:5.5px;height:1px;background:#b0b0b0;"></div>
<div class="abs" style="left:141.4px;top:432.2px;width:1.3px;height:200px;background:#b4b4b4;"></div>
<svg class="abs" style="left:137.5px;top:422.40px" width="9" height="9" viewBox="0 0 9 9"><rect x=".5" y=".5" width="8" height="8" fill="#fff" stroke="#b0b0b0" stroke-width="1"/><path d="M2.300 4.500h4.400" stroke="#8a8a8a" stroke-width="1"/></svg>
<div class="t c" style="left:98.95px;top:4.57px;font-size:31.7px;">7</div>
<div class="t c" style="left:98.95px;top:41.37px;font-size:31.7px;">8</div>
<div class="t c" style="left:98.83px;top:78.17px;font-size:31.7px;">9</div>
<div class="t c" style="left:81.75px;top:114.97px;font-size:31.7px;">10</div>
<div class="t c" style="left:83.12px;top:151.77px;font-size:31.7px;">11</div>
<div class="t c" style="left:81.88px;top:188.57px;font-size:31.7px;">12</div>
<div class="t c" style="left:81.88px;top:225.37px;font-size:31.7px;">13</div>
<div class="t c" style="left:81.62px;top:262.17px;font-size:31.7px;">14</div>
<div class="t c" style="left:81.75px;top:298.97px;font-size:31.7px;">15</div>
<div class="t c" style="left:81.75px;top:335.77px;font-size:31.7px;">16</div>
<div class="t c" style="left:81.88px;top:372.57px;font-size:31.7px;">17</div>
<div class="t c" style="left:81.75px;top:409.37px;font-size:31.7px;">18</div>
<div class="t c" style="left:81.88px;top:446.17px;font-size:31.7px;">19</div>
<div class="t c" style="left:82.25px;top:482.97px;font-size:31.7px;">20</div>
<div class="t c" style="left:82.38px;top:519.77px;font-size:31.7px;">21</div>
<div class="t c" style="left:82.38px;top:556.57px;font-size:31.7px;">22</div>
<div class="t c" style="left:158.25px;top:4.57px;font-size:31.7px;color:#8080ff;-webkit-text-stroke:.9px;letter-spacing:1.014px;">* C Tutorials -</div>
<div class="t c" style="left:375.35px;top:4.57px;font-size:31.7px;color:#8080ff;-webkit-text-stroke:.9px;letter-spacing:0.775px;">www</div>
<div class="t c" style="left:447.05px;top:4.57px;font-size:31.7px;color:#8080ff;-webkit-text-stroke:.9px;letter-spacing:1.273px;">.TestingDocs.com</div>
<svg class="abs" style="left:374.4px;top:31.1px" width="73" height="2" viewBox="0 0 73 2"><path d="M0 1.2L1.5 0.2L3.0 1.2L4.5 0.2L6.0 1.2L7.5 0.2L9.0 1.2L10.5 0.2L12.0 1.2L13.5 0.2L15.0 1.2L16.5 0.2L18.0 1.2L19.5 0.2L21.0 1.2L22.5 0.2L24.0 1.2L25.5 0.2L27.0 1.2L28.5 0.2L30.0 1.2L31.5 0.2L33.0 1.2L34.5 0.2L36.0 1.2L37.5 0.2L39.0 1.2L40.5 0.2L42.0 1.2L43.5 0.2L45.0 1.2L46.5 0.2L48.0 1.2L49.5 0.2L51.0 1.2L52.5 0.2L54.0 1.2L55.5 0.2L57.0 1.2L58.5 0.2L60.0 1.2L61.5 0.2L63.0 1.2L64.5 0.2L66.0 1.2L67.5 0.2L69.0 1.2L70.5 0.2L72.0 1.2" fill="none" stroke="#ff3030" stroke-width=".6"/></svg>
<div class="t c" style="left:158.15px;top:41.37px;font-size:31.7px;color:#8080ff;-webkit-text-stroke:.9px;letter-spacing:-0.059px;">**************************************************</div>
<div class="t c" style="left:158.40px;top:78.17px;font-size:31.7px;color:#8080ff;-webkit-text-stroke:.9px;">*/</div>
<div class="t c" style="left:149.40px;top:114.97px;font-size:31.7px;color:#00a000;letter-spacing:0.103px;">#include&lt;stdio.h&gt;</div>
<div class="t c" style="left:149.40px;top:151.77px;font-size:31.7px;color:#a0a0e0;letter-spacing:-0.019px;">/* Global variable declaration */</div>
<div class="t c" style="left:148.45px;top:188.57px;font-size:31.7px;color:#0000a0;-webkit-text-stroke:.9px;letter-spacing:0.775px;">int</div>
<div class="t c" style="left:193.45px;top:188.57px;font-size:31.7px;letter-spacing:-0.121px;">global_number</div>
<div class="t c" style="left:413.45px;top:188.57px;font-size:31.7px;color:#ff0000;">=</div>
<div class="t c" style="left:440.50px;top:188.57px;font-size:31.7px;color:#f000f0;">10</div>
<div class="t c" style="left:474.65px;top:188.57px;font-size:31.7px;color:#ff0000;">;</div>
<div class="t c" style="left:149.40px;top:262.17px;font-size:31.7px;color:#a0a0e0;letter-spacing:0.093px;">/* Function prototype */</div>
<div class="t c" style="left:149.00px;top:298.97px;font-size:31.7px;color:#0000a0;-webkit-text-stroke:.9px;letter-spacing:0.850px;">void</div>
<div class="t c" style="left:218.45px;top:298.97px;font-size:31.7px;letter-spacing:0.275px;">demo_function</div>
<div class="t c" style="left:430.17px;top:298.97px;font-size:31.7px;color:#ff0000;">()</div>
<div class="t c" style="left:451.15px;top:298.97px;font-size:31.7px;color:#ff0000;">;</div>
<div class="t c" style="left:148.45px;top:372.57px;font-size:31.7px;color:#0000a0;-webkit-text-stroke:.9px;letter-spacing:0.775px;">int</div>
<div class="t c" style="left:192.70px;top:372.57px;font-size:31.7px;letter-spacing:0.283px;">main</div>
<div class="t c" style="left:262.17px;top:372.57px;font-size:31.7px;color:#ff0000;">()</div>
<div class="t c" style="left:149.15px;top:409.37px;font-size:31.7px;color:#ff0000;">{</div>
<div class="t c" style="left:184.40px;top:446.17px;font-size:31.7px;color:#a0a0e0;letter-spacing:0.045px;">/* local variable */</div>
<div class="t c" style="left:183.75px;top:482.97px;font-size:31.7px;color:#0000a0;-webkit-text-stroke:.9px;letter-spacing:0.675px;">int</div>
<div class="t c" style="left:228.00px;top:482.97px;font-size:31.7px;letter-spacing:0.032px;">local_number</div>
<div class="t c" style="left:429.95px;top:482.97px;font-size:31.7px;color:#ff0000;">=</div>
<div class="t c" style="left:455.10px;top:482.97px;font-size:31.7px;color:#f000f0;">20</div>
<div class="t c" style="left:493.35px;top:482.97px;font-size:31.7px;color:#ff0000;">;</div>
<div class="t c" style="left:183.30px;top:556.57px;font-size:31.7px;letter-spacing:0.040px;">printf</div>
<div class="t c" style="left:254.17px;top:556.57px;font-size:31.7px;color:#ff0000;">(</div>
<div class="t c" style="left:266.75px;top:556.57px;font-size:31.7px;color:#0000ff;letter-spacing:-0.015px;">&quot; The local variable is = %d \n&quot;</div>
<div class="t c" style="left:694.90px;top:556.57px;font-size:31.7px;color:#ff0000;">,</div>
<div class="t c" style="left:702.40px;top:556.57px;font-size:31.7px;letter-spacing:0.059px;">local_number</div>
<div class="t c" style="left:895.12px;top:556.57px;font-size:31.7px;color:#ff0000;">)</div>
<div class="t c" style="left:905.05px;top:556.57px;font-size:31.7px;color:#ff0000;">;</div>
</div>
<div class="abs" style="left:1513px;top:171.3px;width:16.5px;height:582px;background:#f0f0f0;"></div>
<div class="abs" style="left:1518.3px;top:272.5px;width:5px;height:210.5px;background:#8a8a8a;"></div>
<div class="abs" style="left:260px;top:753.2px;width:1269.5px;height:17.1px;background:#f0f0f0;"></div>
<div class="abs" style="left:277.8px;top:759.2px;width:838.4px;height:4.8px;background:#8a8a8a;"></div>
<svg class="abs" style="left:0;top:0" width="1536" height="813" viewBox="0 0 1536 813"><rect x="298.400" y="243.500" width="742.600" height="178.100" fill="none" stroke="#9f1b25" stroke-width="2.400"/><path d="M1047.800 346.400L1090.800 321.200a1.800 1.800 0 0 1 2.300 2.600L1077.500 338.200L1169.500 344.900a1.500 1.500 0 0 1 0 3L1077.500 354.700L1093.100 369.200a1.800 1.800 0 0 1-2.300 2.600z" fill="#9e191d"/><circle cx="1218.900" cy="347.300" r="20.100" fill="#9e191d"/><text x="1218.100" y="354.500" font-family="Liberation Sans,sans-serif" font-weight="bold" font-size="20.500" fill="#fff" text-anchor="middle" text-rendering="geometricPrecision">1</text></svg>
<div class="abs" style="left:0px;top:777px;width:1536px;height:36px;background:#f0f0f0;"></div>
<div class="abs" style="left:0px;top:777px;width:1536px;height:1px;background:#e4e4e4;"></div>
<div class="abs" style="left:0px;top:812px;width:1536px;height:1px;background:#cdd0d4;"></div>
<div class="abs" style="left:130px;top:780px;width:167px;height:30px;background:#fcfcfc;border:1px solid #e0e0e0;border-radius:2px"></div>
<div class="t" style="left:1.60px;top:788.00px;font-size:19.6px;color:#111;letter-spacing:-0.027px;">E:\CProject...</div>
<div class="t" style="left:131.30px;top:788.00px;font-size:19.6px;color:#111;letter-spacing:1.162px;">C/C++</div>
<div class="t" style="left:304.00px;top:788.00px;font-size:19.6px;color:#111;letter-spacing:0.107px;">Windows (CR+LF)</div>
<div class="t" style="left:485.00px;top:788.00px;font-size:19.6px;color:#111;letter-spacing:0.314px;">WINDOWS-1252</div>
<div class="t" style="left:657.50px;top:788.00px;font-size:19.6px;color:#111;letter-spacing:0.085px;">Line 11, Col 31, Pos 275</div>
<div class="t" style="left:970.55px;top:788.00px;font-size:19.6px;color:#111;letter-spacing:0.590px;">Insert</div>
<div class="t" style="left:1180.50px;top:788.00px;font-size:19.6px;color:#111;letter-spacing:0.639px;">Read/Write</div>
<div class="t" style="left:1304.05px;top:788.00px;font-size:19.6px;color:#111;letter-spacing:0.833px;">default</div>
<div class="abs" style="left:127.7px;top:780px;width:1px;height:30px;background:#dadada;"></div>
<div class="abs" style="left:299.3px;top:780px;width:1px;height:30px;background:#dadada;"></div>
<div class="abs" style="left:481.3px;top:780px;width:1px;height:30px;background:#dadada;"></div>
<div class="abs" style="left:653.3px;top:780px;width:1px;height:30px;background:#dadada;"></div>
<div class="abs" style="left:967.3px;top:780px;width:1px;height:30px;background:#dadada;"></div>
<div class="abs" style="left:1076.7px;top:780px;width:1px;height:30px;background:#dadada;"></div>
<div class="abs" style="left:1177.8px;top:780px;width:1px;height:30px;background:#dadada;"></div>
<div class="abs" style="left:1300px;top:780px;width:1px;height:30px;background:#dadada;"></div>
<div class="abs" style="left:1465.8px;top:780px;width:1px;height:30px;background:#dadada;"></div>
<svg class="abs" style="left:1491.800px;top:788px" width="16.300" height="11" viewBox="0 0 16.300 11"><rect width="16.300" height="11" fill="#fbeaea"/><rect x="0" y="0.00" width="16.300" height=".9" fill="#e84a5a"/><rect x="0" y="1.57" width="16.300" height=".9" fill="#e84a5a"/><rect x="0" y="3.14" width="16.300" height=".9" fill="#e84a5a"/><rect x="0" y="4.71" width="16.300" height=".9" fill="#e84a5a"/><rect x="0" y="6.28" width="16.300" height=".9" fill="#e84a5a"/><rect x="0" y="7.85" width="16.300" height=".9" fill="#e84a5a"/><rect x="0" y="9.42" width="16.300" height=".9" fill="#e84a5a"/><rect width="7.600" height="5.600" fill="#3c50c8"/></svg>
</body></html>
